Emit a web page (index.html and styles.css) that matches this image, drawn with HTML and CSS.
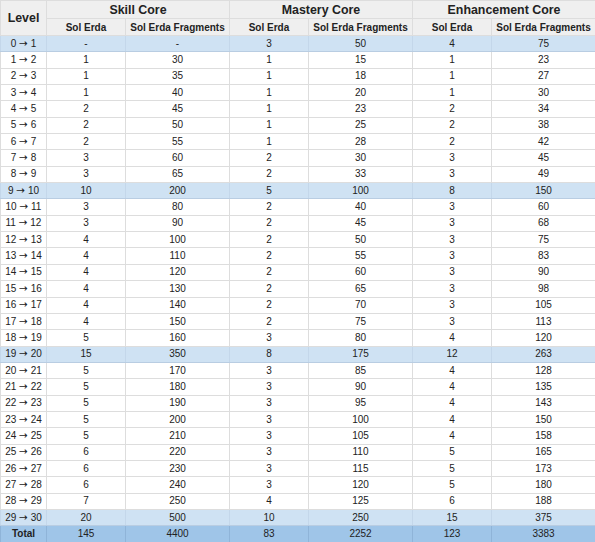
FILE: index.html
```html
<!DOCTYPE html>
<html>
<head>
<meta charset="utf-8">
<link rel="stylesheet" href="styles.css">
</head>
<body>
<table class="cores">
<colgroup>
<col class="c-level"><col class="c-se"><col class="c-fr"><col class="c-se"><col class="c-fr"><col class="c-se"><col class="c-fr2">
</colgroup>
<thead>
<tr class="h1">
<th rowspan="2" class="lvl-h">Level</th>
<th colspan="2" class="grp">Skill Core</th>
<th colspan="2" class="grp">Mastery Core</th>
<th colspan="2" class="grp">Enhancement Core</th>
</tr>
<tr class="h2">
<th>Sol Erda</th><th>Sol Erda Fragments</th>
<th>Sol Erda</th><th>Sol Erda Fragments</th>
<th>Sol Erda</th><th>Sol Erda Fragments</th>
</tr>
</thead>
<tbody>
<tr class="hl"><td>0 <span class="arr">→</span> 1</td><td>-</td><td>-</td><td>3</td><td>50</td><td>4</td><td>75</td></tr>
<tr><td>1 <span class="arr">→</span> 2</td><td>1</td><td>30</td><td>1</td><td>15</td><td>1</td><td>23</td></tr>
<tr><td>2 <span class="arr">→</span> 3</td><td>1</td><td>35</td><td>1</td><td>18</td><td>1</td><td>27</td></tr>
<tr><td>3 <span class="arr">→</span> 4</td><td>1</td><td>40</td><td>1</td><td>20</td><td>1</td><td>30</td></tr>
<tr><td>4 <span class="arr">→</span> 5</td><td>2</td><td>45</td><td>1</td><td>23</td><td>2</td><td>34</td></tr>
<tr><td>5 <span class="arr">→</span> 6</td><td>2</td><td>50</td><td>1</td><td>25</td><td>2</td><td>38</td></tr>
<tr><td>6 <span class="arr">→</span> 7</td><td>2</td><td>55</td><td>1</td><td>28</td><td>2</td><td>42</td></tr>
<tr><td>7 <span class="arr">→</span> 8</td><td>3</td><td>60</td><td>2</td><td>30</td><td>3</td><td>45</td></tr>
<tr><td>8 <span class="arr">→</span> 9</td><td>3</td><td>65</td><td>2</td><td>33</td><td>3</td><td>49</td></tr>
<tr class="hl"><td>9 <span class="arr">→</span> 10</td><td>10</td><td>200</td><td>5</td><td>100</td><td>8</td><td>150</td></tr>
<tr><td>10 <span class="arr">→</span> 11</td><td>3</td><td>80</td><td>2</td><td>40</td><td>3</td><td>60</td></tr>
<tr><td>11 <span class="arr">→</span> 12</td><td>3</td><td>90</td><td>2</td><td>45</td><td>3</td><td>68</td></tr>
<tr><td>12 <span class="arr">→</span> 13</td><td>4</td><td>100</td><td>2</td><td>50</td><td>3</td><td>75</td></tr>
<tr><td>13 <span class="arr">→</span> 14</td><td>4</td><td>110</td><td>2</td><td>55</td><td>3</td><td>83</td></tr>
<tr><td>14 <span class="arr">→</span> 15</td><td>4</td><td>120</td><td>2</td><td>60</td><td>3</td><td>90</td></tr>
<tr><td>15 <span class="arr">→</span> 16</td><td>4</td><td>130</td><td>2</td><td>65</td><td>3</td><td>98</td></tr>
<tr><td>16 <span class="arr">→</span> 17</td><td>4</td><td>140</td><td>2</td><td>70</td><td>3</td><td>105</td></tr>
<tr><td>17 <span class="arr">→</span> 18</td><td>4</td><td>150</td><td>2</td><td>75</td><td>3</td><td>113</td></tr>
<tr><td>18 <span class="arr">→</span> 19</td><td>5</td><td>160</td><td>3</td><td>80</td><td>4</td><td>120</td></tr>
<tr class="hl"><td>19 <span class="arr">→</span> 20</td><td>15</td><td>350</td><td>8</td><td>175</td><td>12</td><td>263</td></tr>
<tr><td>20 <span class="arr">→</span> 21</td><td>5</td><td>170</td><td>3</td><td>85</td><td>4</td><td>128</td></tr>
<tr><td>21 <span class="arr">→</span> 22</td><td>5</td><td>180</td><td>3</td><td>90</td><td>4</td><td>135</td></tr>
<tr><td>22 <span class="arr">→</span> 23</td><td>5</td><td>190</td><td>3</td><td>95</td><td>4</td><td>143</td></tr>
<tr><td>23 <span class="arr">→</span> 24</td><td>5</td><td>200</td><td>3</td><td>100</td><td>4</td><td>150</td></tr>
<tr><td>24 <span class="arr">→</span> 25</td><td>5</td><td>210</td><td>3</td><td>105</td><td>4</td><td>158</td></tr>
<tr><td>25 <span class="arr">→</span> 26</td><td>6</td><td>220</td><td>3</td><td>110</td><td>5</td><td>165</td></tr>
<tr><td>26 <span class="arr">→</span> 27</td><td>6</td><td>230</td><td>3</td><td>115</td><td>5</td><td>173</td></tr>
<tr><td>27 <span class="arr">→</span> 28</td><td>6</td><td>240</td><td>3</td><td>120</td><td>5</td><td>180</td></tr>
<tr><td>28 <span class="arr">→</span> 29</td><td>7</td><td>250</td><td>4</td><td>125</td><td>6</td><td>188</td></tr>
<tr class="hl"><td>29 <span class="arr">→</span> 30</td><td>20</td><td>500</td><td>10</td><td>250</td><td>15</td><td>375</td></tr>
<tr class="total"><td class="total-label">Total</td><td>145</td><td>4400</td><td>83</td><td>2252</td><td>123</td><td>3383</td></tr>
</tbody>
</table>
</body>
</html>
```
FILE: styles.css
```css
html, body {
  margin: 0;
  padding: 0;
  background: #ffffff;
}

.cores {
  border-collapse: collapse;
  table-layout: fixed;
  width: 595px;
  font-family: "Liberation Sans", Arial, sans-serif;
  color: #222222;
}

.c-level { width: 46px; }
.c-se { width: 79px; }
.c-fr { width: 104px; }
.c-fr2 { width: 104px; }

.cores th,
.cores td {
  border: 1px solid #dddddd;
  padding: 0;
  text-align: center;
  vertical-align: middle;
  white-space: nowrap;
  overflow: hidden;
}

.cores th {
  background: #efefef;
  font-weight: bold;
}

.h1 { height: 18px; }
.h2 { height: 17px; }

.grp,
.lvl-h {
  font-size: 12.4px;
}

.h2 th {
  font-size: 10px;
}

.cores tbody tr {
  height: 16.35px;
}

.cores td {
  font-size: 10px;
  line-height: 12px;
}

.arr {
  font-family: "DejaVu Sans", sans-serif;
  font-size: 10.5px;
  line-height: 10px;
}

.hl td {
  background: #cfe2f3;
  border-top-color: #b9cde2;
  border-bottom-color: #b9cde2;
  border-left-color: #c4d7ea;
  border-right-color: #c4d7ea;
}

.total td {
  background: #9fc5e8;
  border-color: #8fb4d8;
}

.total-label {
  font-weight: bold;
}
```
